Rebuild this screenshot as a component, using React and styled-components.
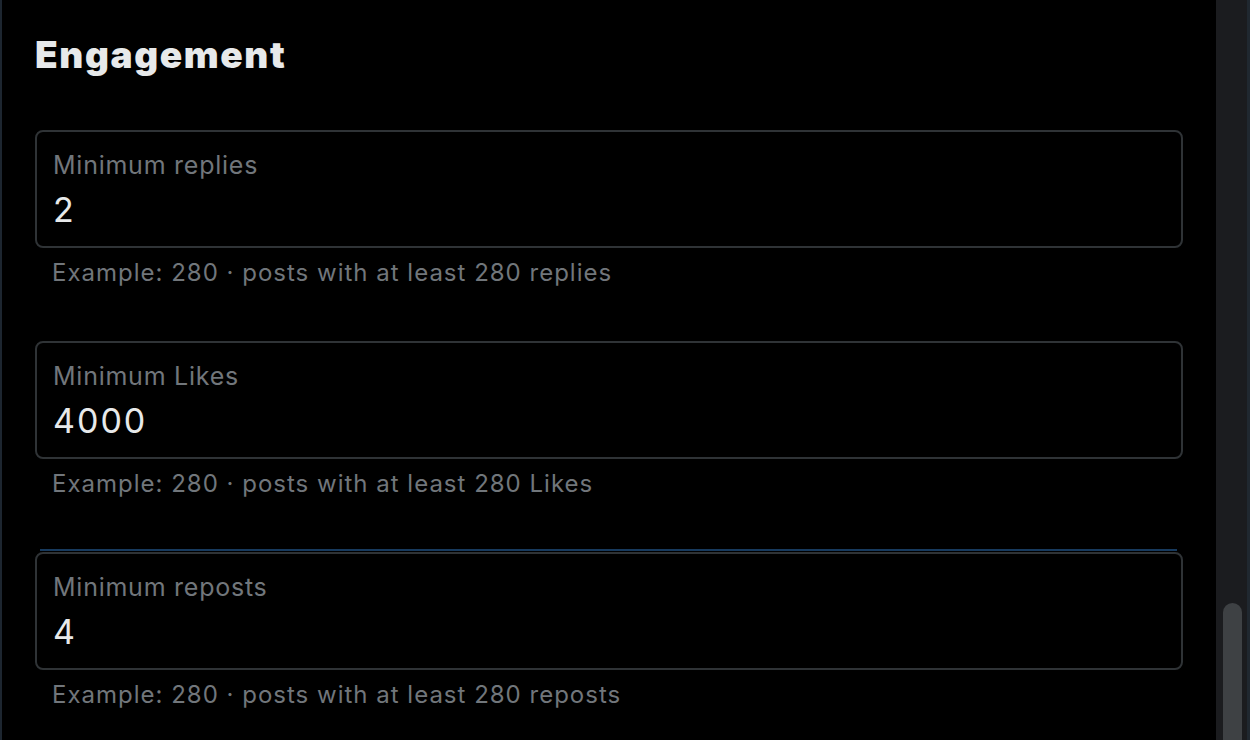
import React from 'react';
import styled, { createGlobalStyle } from 'styled-components';

const GlobalStyle = createGlobalStyle`
  html, body {
    margin: 0;
    padding: 0;
    background: #000;
    overflow: hidden;
  }
  * {
    box-sizing: border-box;
  }
`;

const Frame = styled.div`
  display: flex;
  width: 1250px;
  height: 740px;
  background: #000;
  font-family: Inter, "Noto Sans", "Liberation Sans", sans-serif;
  overflow: hidden;
`;

const LeftEdge = styled.div`
  width: 2px;
  flex-shrink: 0;
  background: #1d2630;
`;

const Panel = styled.div`
  flex: 1;
  padding: 33px 33px 0 33px;
  background: #000;
`;

const Heading = styled.h2`
  margin: 0 0 53px;
  font-size: 37px;
  line-height: 44px;
  font-weight: 900;
  color: #e7e9ea;
  letter-spacing: 1.6px;
`;

const Group = styled.div`
  margin-bottom: 53px;
`;

const Field = styled.div`
  position: relative;
  display: flex;
  flex-direction: column;
  gap: 9px;
  height: 118px;
  padding: 17px 16px 0;
  border: 2px solid #2f3336;
  border-radius: 8px;

  &::before {
    content: '';
    display: ${p => (p.$highlight ? 'block' : 'none')};
    position: absolute;
    top: -5px;
    left: 3px;
    right: 4px;
    height: 2px;
    background: #173a5e;
  }
`;

const Label = styled.div`
  font-size: 25px;
  line-height: 32px;
  letter-spacing: 0.75px;
  color: #71767b;
`;

const Value = styled.div`
  font-size: 34px;
  line-height: 40px;
  letter-spacing: 2px;
  color: #e7e9ea;
`;

const Helper = styled.div`
  margin-top: 10px;
  padding-left: 17px;
  font-size: 24px;
  line-height: 30px;
  letter-spacing: 1px;
  color: #71767b;
`;

const Track = styled.div`
  position: relative;
  width: 31px;
  flex-shrink: 0;
  background: #1b1c1f;
`;

const Thumb = styled.div`
  position: absolute;
  left: 7px;
  width: 19px;
  top: 603px;
  bottom: -10px;
  border-radius: 10px;
  background: #3e4144;
`;

const RightEdge = styled.div`
  width: 3px;
  flex-shrink: 0;
  background: #202830;
`;

const fields = [
  { label: 'Minimum replies', value: '2', noun: 'replies' },
  { label: 'Minimum Likes', value: '4000', noun: 'Likes' },
  { label: 'Minimum reposts', value: '4', noun: 'reposts', highlight: true },
];

export default function App() {
  return (
    <>
      <GlobalStyle />
      <Frame>
        <LeftEdge />
        <Panel>
          <Heading>Engagement</Heading>
          {fields.map(f => (
            <Group key={f.label}>
              <Field $highlight={f.highlight}>
                <Label>{f.label}</Label>
                <Value>{f.value}</Value>
              </Field>
              <Helper>Example: 280 · posts with at least 280 {f.noun}</Helper>
            </Group>
          ))}
        </Panel>
        <Track>
          <Thumb />
        </Track>
        <RightEdge />
      </Frame>
    </>
  );
}
